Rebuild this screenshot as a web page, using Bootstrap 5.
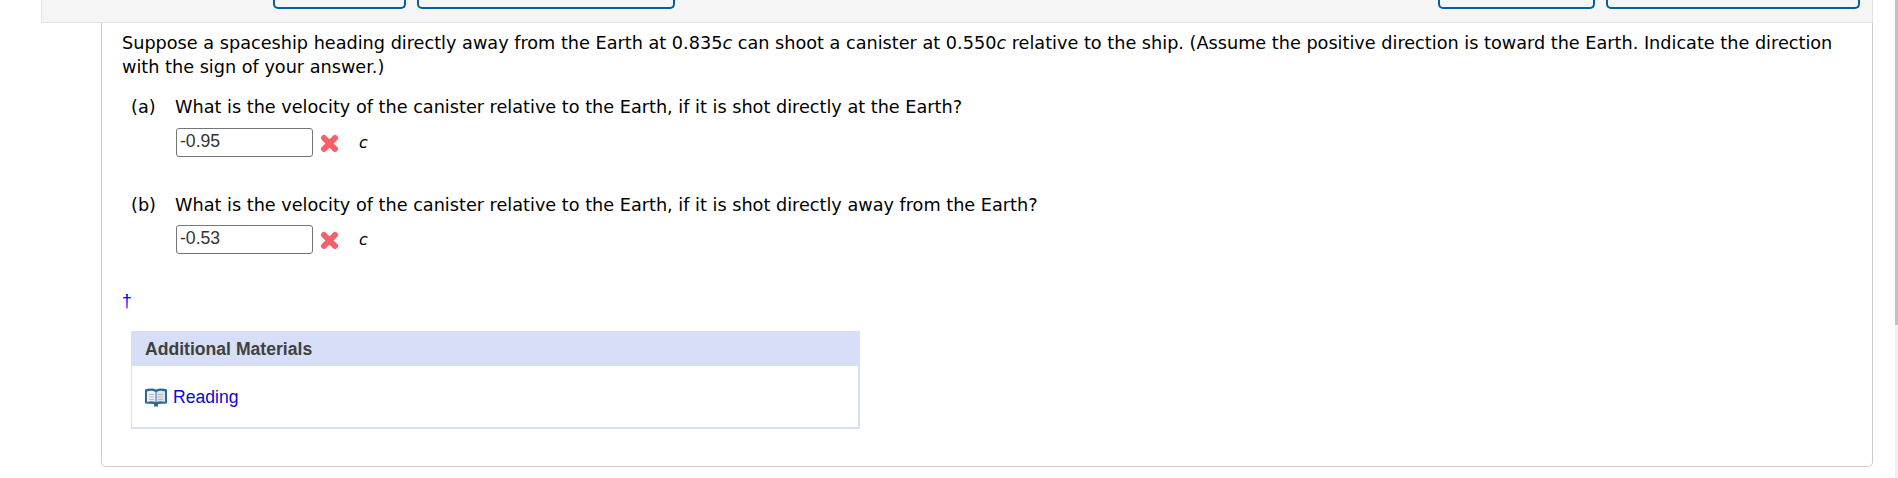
<!DOCTYPE html>
<html lang="en">
<head>
<meta charset="utf-8">
<title>Question</title>
<link href="https://cdn.jsdelivr.net/npm/bootstrap@5.3.0/dist/css/bootstrap.min.css" rel="stylesheet">
<style>
html,body{height:478px;overflow:hidden;background:#fff}
body{font-family:"DejaVu Sans",Verdana,sans-serif;font-size:17.66px;color:#000}
.shell{height:478px}
.page-area{width:1895px;padding-left:41px;padding-right:22px}
.scroll-track{width:3px;background:#f1f1f1}
.scroll-thumb{height:325px;background:#c1c1c1}
.top-strip{height:23px;background:#f5f5f5;border:1px solid #e3e3e3;border-top:0;padding-left:231px;padding-right:12px}
.ghost-btn{height:9px;border:2px solid #00619c;border-top:0;border-radius:0 0 5px 5px;background:transparent}
.w-a{width:133px}.w-b{width:258px}.w-c{width:157px}.w-d{width:254px}
.q-gap{gap:11px}
.spacer-grow{flex:1}
.q-card{margin-left:60px;height:444px;border:1px solid #ccc;border-top:0;border-radius:0 0 5px 5px;padding:8px 20px 0 20px}
.q-text{font-size:17.66px;line-height:24px;margin:0;width:1725px}
.part{margin:16px 0 0 9px;line-height:25px}
.part-label{width:44px;flex:none}
.answer{margin:8px 0 0 54px;height:29px}
.answer-low{margin-top:7px}
.answer-box{width:137px;height:29px;border:1px solid #767676;border-radius:3px;font:17.6px "Liberation Sans",Arial,sans-serif;color:#333;padding:0 3px 3px;background:#fff}
.answer-box:focus{outline:0}
.bad-mark{margin-left:7px;margin-top:2px}
.unit{margin-left:20px;font-style:italic;font-size:16px}
.part-b{margin-top:36px}
.dag{color:#0000ee;font:17.6px/20px "Liberation Sans",Arial,sans-serif;margin-top:37px}
.materials{margin:20px 0 0 9px;width:729px;height:98px;border:1px solid #d6dff7;border-width:1px 2px 2px 1px}
.mat-head{height:34px;background:#d6dff7;padding-left:13px;font:bold 17.6px/34px "Liberation Sans",Arial,sans-serif;color:#404040}
.mat-body{padding:19px 0 0 13px;font:17.6px/24px "Liberation Sans",Arial,sans-serif}
.mat-link{color:#0a0ad2;text-decoration:none;margin-left:6px}
</style>
</head>
<body>
<div class="shell d-flex">
  <div class="page-area">
    <div class="top-strip d-flex q-gap">
      <div class="ghost-btn w-a"></div>
      <div class="ghost-btn w-b"></div>
      <div class="spacer-grow"></div>
      <div class="ghost-btn w-c"></div>
      <div class="ghost-btn w-d"></div>
    </div>
    <div class="q-card">
      <p class="q-text">Suppose a spaceship heading directly away from the Earth at 0.835<i>c</i> can shoot a canister at 0.550<i>c</i> relative to the ship. (Assume the positive direction is toward the Earth. Indicate the direction with the sign of your answer.)</p>
      <div class="part d-flex"><span class="part-label">(a)</span><span>What is the velocity of the canister relative to the Earth, if it is shot directly at the Earth?</span></div>
      <div class="answer d-flex align-items-center">
        <input class="answer-box" value="-0.95" aria-label="answer a">
        <svg class="bad-mark" width="19" height="19" viewBox="0 0 19 19"><path d="M4 4 15 15M15 4 4 15" stroke="#f6606a" stroke-width="6" stroke-linecap="round" fill="none"/></svg>
        <span class="unit">c</span>
      </div>
      <div class="part part-b d-flex"><span class="part-label">(b)</span><span>What is the velocity of the canister relative to the Earth, if it is shot directly away from the Earth?</span></div>
      <div class="answer answer-low d-flex align-items-center">
        <input class="answer-box" value="-0.53" aria-label="answer b">
        <svg class="bad-mark" width="19" height="19" viewBox="0 0 19 19"><path d="M4 4 15 15M15 4 4 15" stroke="#f6606a" stroke-width="6" stroke-linecap="round" fill="none"/></svg>
        <span class="unit">c</span>
      </div>
      <div class="dag">†</div>
      <div class="materials">
        <div class="mat-head">Additional Materials</div>
        <div class="mat-body d-flex align-items-center">
          <svg width="22" height="19" viewBox="0 0 22 19"><path d="M0 1.500C4 0 8 0 11 1.500 14 0 18 0 22 1.500V15.500L13 16 13 18.500H9L9 16 0 15.500Z" fill="#2a6a9a"/><path d="M2 3.500C5 2.500 8 2.500 10.500 4V14C8 13 5 13 2 14Z" fill="#eef2f5"/><path d="M20 3.500C17 2.500 14 2.500 11.500 4V14C14 13 17 13 20 14Z" fill="#dfe3e6"/><path d="M4 6.500H9M4 9H9M4 11.500H9M13 6.500H18M13 9H18M13 11.500H18" stroke="#b3bbc1" stroke-width="1"/></svg>
          <a class="mat-link" href="#">Reading</a>
        </div>
      </div>
    </div>
  </div>
  <div class="scroll-track"><div class="scroll-thumb"></div></div>
</div>
<script src="https://cdn.jsdelivr.net/npm/bootstrap@5.3.0/dist/js/bootstrap.bundle.min.js"></script>
</body>
</html>
